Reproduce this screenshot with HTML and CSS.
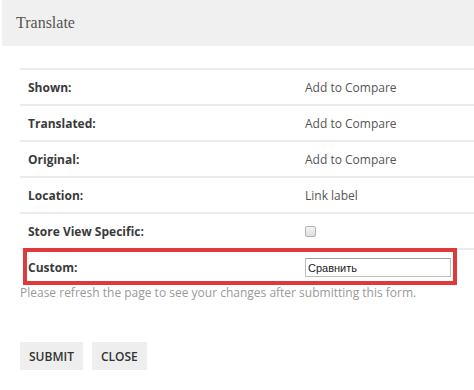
FILE: index.html
```html
<!DOCTYPE html>
<html lang="en">

<head>
    <meta charset="UTF-8">
    <meta name="viewport" content="width=device-width, initial-scale=1.0">
    <title>Translate</title>
    <link rel="stylesheet" href="styles.css">
</head>

<body>
    <div class="modal">
        <div class="modal-header">Translate</div>

        <div class="modal-body">
            <div class="rows">
                <div class="row">
                    <div class="row-label">Shown:</div>
                    <div class="row-value">Add to Compare</div>
                </div>
                <div class="row">
                    <div class="row-label">Translated:</div>
                    <div class="row-value">Add to Compare</div>
                </div>
                <div class="row">
                    <div class="row-label">Original:</div>
                    <div class="row-value">Add to Compare</div>
                </div>
                <div class="row">
                    <div class="row-label">Location:</div>
                    <div class="row-value">Link label</div>
                </div>
                <div class="row">
                    <div class="row-label">Store View Specific:</div>
                    <div class="row-value"><input class="check" type="checkbox" name="store_specific"></div>
                </div>
                <div class="row row-custom">
                    <div class="row-label">Custom:</div>
                    <div class="row-value"><input class="custom-input" type="text" name="custom" value="Сравнить"></div>
                    <div class="highlight"></div>
                </div>
            </div>

            <p class="help">Please refresh the page to see your changes after submitting this form.</p>

            <div class="buttons">
                <button type="button" class="btn">Submit</button>
                <button type="button" class="btn">Close</button>
            </div>
        </div>
    </div>
</body>

</html>
```

FILE: styles.css
```css
body {
    margin: 0;
    font-family: "Open Sans", sans-serif;
    font-size: 12px;
    color: #333;
    background: #fff;
}

.modal-header {
    height: 46px;
    margin-left: 2px;
    padding-left: 14px;
    display: flex;
    align-items: center;
    background: #f0f0f0;
    font-family: "Liberation Serif", serif;
    font-size: 16px;
    color: #555;
}

.modal-body {
    padding: 22px 0 0 20px;
}

.rows {
    display: flex;
    flex-direction: column;
}

.row {
    display: grid;
    grid-template-columns: 277px 1fr;
    align-items: center;
    height: 34px;
    padding-left: 8px;
    border-top: 2px solid #ebebeb;
}

.row-label {
    font-weight: 700;
    color: #3a3a3a;
}

.row-value {
    color: #555;
    display: flex;
    align-items: center;
}

/* light grey checkbox like the old admin theme */
.check {
    appearance: none;
    width: 11px;
    height: 11px;
    margin: 0;
    border: 1px solid #b4b4b4;
    border-radius: 2px;
    background: linear-gradient(#f4f4f4, #dedede);
}

.row-custom {
    position: relative;
    height: 35px;
}

.custom-input {
    width: 146px;
    height: 19px;
    box-sizing: border-box;
    margin: 0;
    padding: 0 2px;
    border: 1px solid #bdbdbd;
    border-top-color: #9f9f9f;
    font-family: "Liberation Sans", sans-serif;
    font-size: 11px;
    color: #222;
}

.highlight {
    position: absolute;
    left: 3px;
    top: -2px;
    width: 434px;
    height: 37px;
    box-sizing: border-box;
    border: 4px solid #de3a3c;
    pointer-events: none;
}

.help {
    margin: 0;
    line-height: 16px;
    color: #9a9a9a;
}

.buttons {
    display: flex;
    gap: 9px;
    margin-top: 41px;
}

.btn {
    height: 28px;
    padding: 0 9px;
    border: none;
    background: #eee;
    font-family: "Open Sans", sans-serif;
    font-size: 12px;
    font-weight: 600;
    text-transform: uppercase;
    color: #333;
}
```
